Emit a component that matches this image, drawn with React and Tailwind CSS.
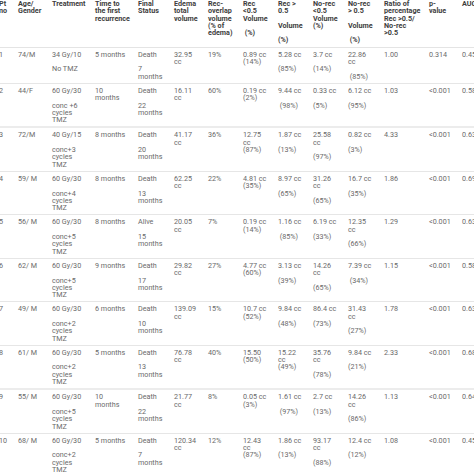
const header = [
  'Pt\nno',
  'Age/\nGender',
  'Treatment',
  'Time to\nthe first\nrecurrence',
  'Final\nStatus',
  'Edema\ntotal\nvolume',
  'Rec-\noverlap\nvolume\n(% of\nedema)',
  'Rec\n<0.5\nVolume\n\n (%)',
  'Rec >\n0.5\n\nVolume\n\n(%)',
  'No-rec\n<0.5\nVolume\n(%)',
  'No-rec\n> 0.5\n\nVolume\n\n (%)',
  'Ratio of\npercentage\nRec >0.5/\nNo-rec\n>0.5',
  'p-\nvalue',
  'AUC',
]

const rows = [
  { cells: ['1', '74/M', '34 Gy/10\n\nNo TMZ', '5 months', 'Death\n\n7\nmonths', '32.95\ncc', '19%', '0.89 cc\n(14%)', '5.28 cc\n\n(85%)', '3.7 cc\n\n(14%)', '22.86\ncc\n\n (85%)', '1.00', '0.314', '0.45'] },
  { cells: ['2', '44/F', '60 Gy/30\n\nconc +6\ncycles\nTMZ', '10\nmonths', 'Death\n\n22\nmonths', '16.11\ncc', '60%', '0.19 cc\n(2%)', '9.44 cc\n\n (98%)', '0.33 cc\n\n(5%)', '6.12 cc\n\n(95%)', '1.03', '<0.001', '0.58'], thick: true },
  { cells: ['3', '72/M', '40 Gy/15\n\nconc+3\ncycles\nTMZ', '8 months', 'Death\n\n20\nmonths', '41.17\ncc', '36%', '12.75\ncc\n(87%)', '1.87 cc\n\n(13%)', '25.58\ncc\n\n(97%)', '0.82 cc\n\n(3%)', '4.33', '<0.001', '0.63'] },
  { cells: ['4', '59/ M', '60 Gy/30\n\nconc+4\ncycles\nTMZ', '8 months', 'Death\n\n13\nmonths', '62.25\ncc', '22%', '4.81 cc\n(35%)', '8.97 cc\n\n(65%)', '31.26\ncc\n\n(65%)', '16.7 cc\n\n(35%)', '1.86', '<0.001', '0.69'] },
  { cells: ['5', '56/ M', '60 Gy/30\n\nconc+5\ncycles\nTMZ', '8 months', 'Alive\n\n15\nmonths', '20.05\ncc', '7%', '0.19 cc\n(14%)', '1.16 cc\n\n (85%)', '6.19 cc\n\n(33%)', '12.35\ncc\n\n(66%)', '1.29', '<0.001', '0.63'] },
  { cells: ['6', '62/ M', '60 Gy/30\n\nconc+5\ncycles\nTMZ', '9 months', 'Death\n\n17\nmonths', '29.82\ncc', '27%', '4.77 cc\n(60%)', '3.13 cc\n\n(39%)', '14.26\ncc\n\n(65%)', '7.39 cc\n\n (34%)', '1.15', '<0.001', '0.58'] },
  { cells: ['7', '49/ M', '60 Gy/30\n\nconc+2\ncycles\nTMZ', '6 months', 'Death\n\n10\nmonths', '139.09\ncc', '15%', '10.7 cc\n(52%)', '9.84 cc\n\n(48%)', '86.4 cc\n\n(73%)', '31.43\ncc\n\n(27%)', '1.78', '<0.001', '0.63'] },
  { cells: ['8', '61/ M', '60 Gy/30\n\nconc+2\ncycles\nTMZ', '5 months', 'Death\n\n13\nmonths', '76.78\ncc', '40%', '15.50\n(50%)', '15.22\ncc\n(49%)', '35.76\ncc\n\n(78%)', '9.84 cc\n\n(21%)', '2.33', '<0.001', '0.68'], thick: true },
  { cells: ['9', '55/ M', '60 Gy/30\n\nconc+5\ncycles\nTMZ', '10\nmonths', 'Death\n\n22\nmonths', '21.77\ncc', '8%', '0.05 cc\n(3%)', '1.61 cc\n\n (97%)', '2.7 cc\n\n(13%)', '14.26\ncc\n\n(86%)', '1.13', '<0.001', '0.64'] },
  { cells: ['10', '68/ M', '60 Gy/30\n\nconc+2\ncycles\nTMZ', '5 months', 'Death\n\n7\nmonths', '120.34\ncc', '12%', '12.43\ncc\n(87%)', '1.86 cc\n\n(13%)', '93.17\ncc\n\n(88%)', '12.4 cc\n\n(12%)', '1.08', '<0.001', '0.45'] },
]

// column template shared by header and body rows
const cols = 'grid grid-cols-[19px_34px_43px_43px_36px_34px_35px_35px_35px_35px_36px_45px_33px_40px]'

function Cell({ text }) {
  return <div className="whitespace-pre">{text}</div>
}

export default function App() {
  return (
    <div
      className="w-[474px] h-[474px] overflow-hidden bg-white text-[7.2px] leading-[7.3px]"
      style={{ fontFamily: 'Roboto, "Liberation Sans", sans-serif' }}
    >
      <div className="-ml-[1px] w-[520px]">
        <div className={`${cols} pb-[3px] border-b border-[#e4e4e4] font-bold text-[#3d3d3d]`}>
          {header.map((h, i) => (
            <Cell key={i} text={h} />
          ))}
        </div>
        {rows.map((r, ri) => (
          <div
            key={ri}
            className={`${cols} py-[3px] text-[#6a6a6a] ${
              r.thick ? 'border-b-2 border-[#ececec]' : 'border-b border-[#e6e6e6]'
            }`}
          >
            {r.cells.map((c, ci) => (
              <Cell key={ci} text={c} />
            ))}
          </div>
        ))}
      </div>
    </div>
  )
}
